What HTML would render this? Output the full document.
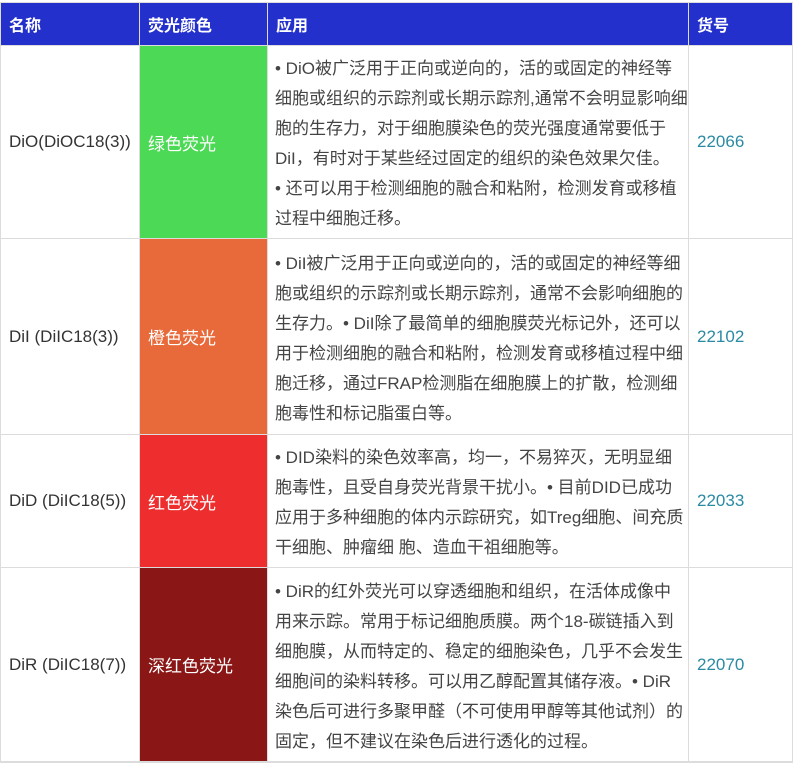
<!DOCTYPE html>
<html><head><meta charset="utf-8"><style>
body{margin:0;width:793px;height:763px;background:#fff;overflow:hidden;font-family:"Liberation Sans","Noto Sans CJK SC",sans-serif;}
.c{position:absolute;box-sizing:border-box;display:flex;align-items:center;font-size:17px;color:#333;}
.h{background:#2430cc;color:#fff;font-weight:bold;font-size:16px;padding-left:8px;}
.t{line-height:30px;white-space:nowrap;padding-left:7px;color:#444;padding-top:4px;}
.n{padding-left:8px;}
.num{color:#2b8aa3;padding-left:8px;}
.col{color:#fff;padding-left:8px;}
.l{position:absolute;background:#dcdcdc;}
</style></head><body>
<div class="c h" style="left:1px;top:3px;width:138px;height:42px">名称</div>
<div class="c h" style="left:140px;top:3px;width:127px;height:42px">荧光颜色</div>
<div class="c h" style="left:268px;top:3px;width:420px;height:42px">应用</div>
<div class="c h" style="left:689px;top:3px;width:103px;height:42px">货号</div>

<div class="c n" style="left:1px;top:46px;width:138px;height:192px">DiO(DiOC18(3))</div>
<div class="c col" style="left:140px;top:46px;width:127px;height:192px;background:#4cd955">绿色荧光</div>
<div class="c t" style="left:268px;top:46px;width:420px;height:192px"><div>• DiO被广泛用于正向或逆向的，活的或固定的神经等<br>细胞或组织的示踪剂或长期示踪剂,通常不会明显影响细<br>胞的生存力，对于细胞膜染色的荧光强度通常要低于<br>DiI，有时对于某些经过固定的组织的染色效果欠佳。<br>• 还可以用于检测细胞的融合和粘附，检测发育或移植<br>过程中细胞迁移。</div></div>
<div class="c num" style="left:689px;top:46px;width:103px;height:192px">22066</div>

<div class="c n" style="left:1px;top:239px;width:138px;height:195px">DiI (DiIC18(3))</div>
<div class="c col" style="left:140px;top:239px;width:127px;height:195px;background:#e8693a">橙色荧光</div>
<div class="c t" style="left:268px;top:239px;width:420px;height:195px"><div>• DiI被广泛用于正向或逆向的，活的或固定的神经等细<br>胞或组织的示踪剂或长期示踪剂，通常不会影响细胞的<br>生存力。• DiI除了最简单的细胞膜荧光标记外，还可以<br>用于检测细胞的融合和粘附，检测发育或移植过程中细<br>胞迁移，通过FRAP检测脂在细胞膜上的扩散，检测细<br>胞毒性和标记脂蛋白等。</div></div>
<div class="c num" style="left:689px;top:239px;width:103px;height:195px">22102</div>

<div class="c n" style="left:1px;top:435px;width:138px;height:132px">DiD (DiIC18(5))</div>
<div class="c col" style="left:140px;top:435px;width:127px;height:132px;background:#ee2e2e">红色荧光</div>
<div class="c t" style="left:268px;top:435px;width:420px;height:132px"><div>• DID染料的染色效率高，均一，不易猝灭，无明显细<br>胞毒性，且受自身荧光背景干扰小。• 目前DID已成功<br>应用于多种细胞的体内示踪研究，如Treg细胞、间充质<br>干细胞、肿瘤细 胞、造血干祖细胞等。</div></div>
<div class="c num" style="left:689px;top:435px;width:103px;height:132px">22033</div>

<div class="c n" style="left:1px;top:568px;width:138px;height:193px">DiR (DiIC18(7))</div>
<div class="c col" style="left:140px;top:568px;width:127px;height:193px;background:#8a1616">深红色荧光</div>
<div class="c t" style="left:268px;top:568px;width:420px;height:193px"><div>• DiR的红外荧光可以穿透细胞和组织，在活体成像中<br>用来示踪。常用于标记细胞质膜。两个18-碳链插入到<br>细胞膜，从而特定的、稳定的细胞染色，几乎不会发生<br>细胞间的染料转移。可以用乙醇配置其储存液。• DiR<br>染色后可进行多聚甲醛（不可使用甲醇等其他试剂）的<br>固定，但不建议在染色后进行透化的过程。</div></div>
<div class="c num" style="left:689px;top:568px;width:103px;height:193px">22070</div>

<div class="l" style="left:0;top:2px;width:793px;height:1px"></div>
<div class="l" style="left:0;top:45px;width:793px;height:1px"></div>
<div class="l" style="left:0;top:238px;width:793px;height:1px"></div>
<div class="l" style="left:0;top:434px;width:793px;height:1px"></div>
<div class="l" style="left:0;top:567px;width:793px;height:1px"></div>
<div class="l" style="left:0;top:761px;width:793px;height:2px"></div>
<div class="l" style="left:0;top:2px;width:1px;height:761px"></div>
<div class="l" style="left:139px;top:2px;width:1px;height:761px"></div>
<div class="l" style="left:267px;top:2px;width:1px;height:761px"></div>
<div class="l" style="left:688px;top:2px;width:1px;height:761px"></div>
<div class="l" style="left:792px;top:2px;width:1px;height:761px"></div>
</body></html>
